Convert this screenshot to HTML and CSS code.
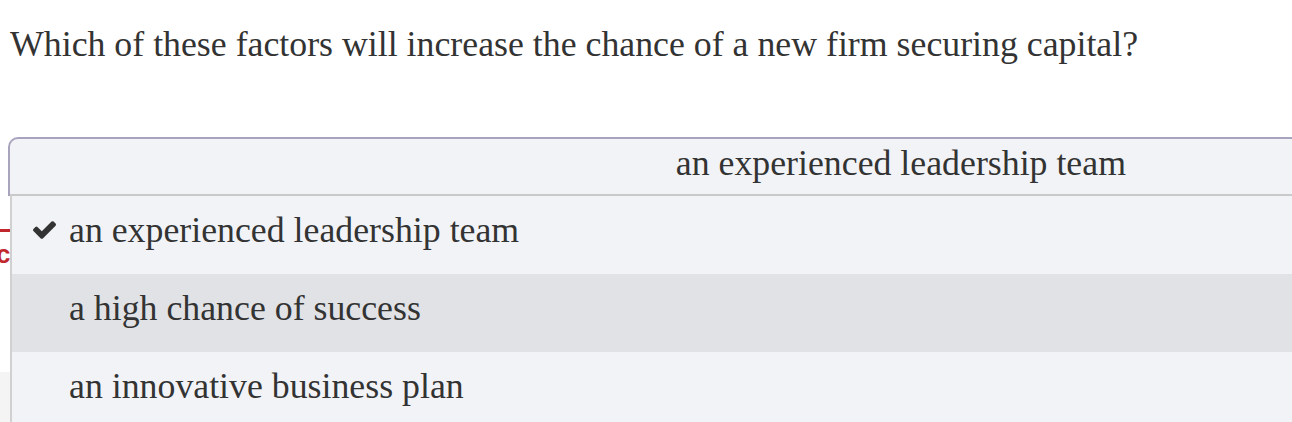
FILE: index.html
```html
<!DOCTYPE html>
<html lang="en">
<head>
    <meta charset="UTF-8">
    <title>Question</title>
    <link rel="stylesheet" href="styles.css">
</head>
<body>
    <!-- 题目 -->
    <p class="question">Which of these factors will increase the chance of a new firm securing capital?</p>

    <!-- 被下拉菜单盖住的内容 -->
    <div class="behind-mark"></div>
    <div class="behind-letter">c</div>
    <div class="behind-panel"></div>

    <!-- 下拉选择 -->
    <div class="select">
        <div class="select-value">an experienced leadership team</div>
    </div>
    <ul class="menu">
        <li class="menu-item selected">
            <svg class="check" viewBox="121 334 1550 1188"><path d="M1671 566q0 40-28 68l-724 724-136 136q-28 28-68 28t-68-28l-136-136-362-362q-28-28-28-68t28-68l136-136q28-28 68-28t68 28l294 295 656-657q28-28 68-28t68 28l136 136q28 28 28 68z"/></svg>
            an experienced leadership team
        </li>
        <li class="menu-item hover">a high chance of success</li>
        <li class="menu-item">an innovative business plan</li>
    </ul>
</body>
</html>
```
FILE: styles.css
```css
/* 基础样式 */
* {
    box-sizing: border-box;
    margin: 0;
    padding: 0;
}

body {
    position: relative;
    height: 422px;
    overflow: hidden;
    font-family: "Liberation Serif", "Times New Roman", serif;
    font-size: 35.8px;
    color: #333;
    background: #fff;
}

.question {
    padding: 24px 0 0 10px;
    line-height: 41px;
    white-space: nowrap;
}

/* 下拉框 */
.select {
    margin: 72px 0 0 8px;
    height: 59px;
    border-top: 2px solid #a9a4be;
    border-left: 2px solid #a9a4be;
    border-top-left-radius: 10px;
    background: #f2f3f7;
}

.select-value {
    line-height: 49px;
    text-align: right;
    padding-right: 166px;
    white-space: nowrap;
}

/* 菜单 */
.menu {
    position: relative;
    z-index: 2;
    list-style: none;
    margin: -2px 0 0 10px;
    border-top: 2px solid #c9c9c9;
    border-left: 2px solid #d0d0d0;
    background: #f2f3f7;
}

.menu-item {
    display: flex;
    align-items: center;
    height: 78px;
    padding: 14px 0 24px 57px;
    line-height: 40px;
    white-space: nowrap;
    position: relative;
}

.menu-item.hover {
    background: #e1e2e6;
}

.check {
    position: absolute;
    left: 21px;
    top: 25px;
    width: 23px;
    height: 18px;
    fill: #333;
}

/* 背后内容 */
.behind-mark {
    position: absolute;
    left: 0;
    top: 229px;
    width: 10px;
    height: 3px;
    background: #c1272d;
}

.behind-letter {
    position: absolute;
    left: -4px;
    top: 239px;
    font-family: "Liberation Sans", Arial, sans-serif;
    font-weight: bold;
    font-size: 26px;
    line-height: 30px;
    color: #c1272d;
}

.behind-panel {
    position: absolute;
    left: 0;
    top: 372px;
    width: 10px;
    height: 50px;
    background: #f4f4f4;
}
```
